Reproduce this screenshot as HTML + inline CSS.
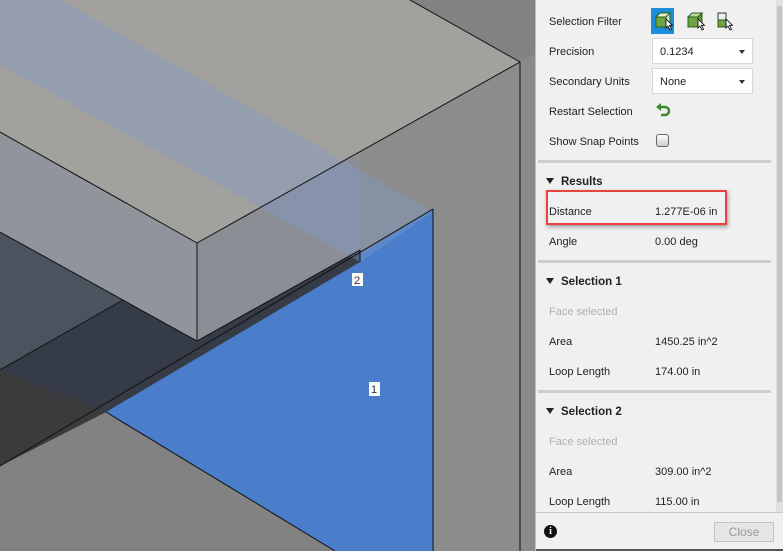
<!DOCTYPE html>
<html><head><meta charset="utf-8"><style>
*{margin:0;padding:0;box-sizing:border-box}
body{width:783px;height:551px;overflow:hidden;position:relative;font-family:"Liberation Sans",Arial,sans-serif;font-size:11px;color:#222;background:#8a8a8a}
svg.v{position:absolute;left:0;top:0}
#p{position:absolute;left:535px;top:0;width:248px;height:551px;background:#f0f0f0;border-left:1px solid #bdbdbd}
.t{position:absolute;left:13px;white-space:nowrap;margin-top:1px}
.val{position:absolute;left:119px;white-space:nowrap;margin-top:1px}
.h{font-weight:bold;font-size:11.5px;left:10px}
.h:before{content:"";display:inline-block;border-left:4px solid transparent;border-right:4px solid transparent;border-top:6px solid #222;margin-right:7px;vertical-align:1px}
.g{color:#b0b0b0}
.sep{position:absolute;left:2px;width:233px;height:3px;background:#cdcdcd}
.dd{position:absolute;left:116px;width:101px;height:26px;background:#fff;border:1px solid #d8d8d8;padding:7px 7px 5px}
.dd:after{content:"";position:absolute;right:7px;top:11px;border-left:3px solid transparent;border-right:3px solid transparent;border-top:4px solid #333}
</style></head><body>
<svg class="v" width="535" height="551" viewBox="0 0 535 551">
<rect width="535" height="551" fill="#8c8c8c"/>
<polygon points="410,0 535,0 535,70 520,62" fill="#828282"/>
<polygon points="520,62 535,54 535,551 520,551" fill="#8a8a8a"/>
<polygon points="0,0 410,0 520,62 197,243 0,132" fill="#a2a19d"/>
<polygon points="0,466 433,209 433,551 0,551" fill="#828282"/>
<polygon points="106,412 433,209 433,551 335,551" fill="#4a7dca"/>
<polygon points="0,232 197,341 360,250 360,262 106,412 0,466" fill="#363c47"/>
<polygon points="0,370 106,412 0,466" fill="#3b3b3d"/>
<polygon points="0,232 123,300 0,370" fill="#4b535e"/>
<polygon points="0,132 197,243 197,341 0,232" fill="#90959b"/>
<polygon points="197,243 360,152 360,250 197,341" fill="#8b8f95"/>
<polygon points="61,0 433,212 360,262 0,65 0,0" fill="rgba(125,155,205,0.38)"/>
<g stroke="#111" stroke-width="1" fill="none">
<line x1="410" y1="0" x2="520" y2="62"/><line x1="520" y1="62" x2="520" y2="551"/>
<line x1="520" y1="62" x2="197" y2="243"/><line x1="197" y1="243" x2="197" y2="341"/>
<line x1="0" y1="132" x2="197" y2="243"/><line x1="0" y1="232" x2="197" y2="341"/>
<line x1="197" y1="341" x2="360" y2="250"/><line x1="360" y1="250" x2="360" y2="262"/>
<line x1="433" y1="209" x2="433" y2="551"/><line x1="433" y1="209" x2="0" y2="466"/>
<line x1="106" y1="412" x2="335" y2="551"/><line x1="0" y1="370" x2="123" y2="300"/>
</g>
<rect x="352" y="273" width="11" height="13" fill="#fafafa"/><text x="354" y="284" font-size="11" fill="#333" font-family="Liberation Sans">2</text>
<rect x="369" y="382" width="11" height="14" fill="#fafafa"/><text x="371" y="393" font-size="11" fill="#333" font-family="Liberation Sans">1</text>
</svg>
<div id="p">
<div style="position:absolute;right:0;top:0;width:7px;height:512px;background:#e0e0e0"><div style="margin:6px 1px;height:496px;background:#c4c4c4;border-radius:2px"></div></div>
<div class="t" style="top:15px">Selection Filter</div>
<div style="position:absolute;left:115px;top:8px;width:23px;height:26px;background:#1a8fd8"></div>
<svg style="position:absolute;left:118px;top:11px" width="90" height="20" viewBox="0 0 90 20">
<g><rect x="2" y="6" width="10" height="10" fill="#6ea543" stroke="#2f5d1a"/><polygon points="2,6 6,2 16,2 12,6" fill="#e8f0dc" stroke="#2f5d1a"/><polygon points="12,6 16,2 16,12 12,16" fill="#d8e8c8" stroke="#2f5d1a"/><path d="M12,8 l0,9 l2,-2 l2,4 l1.5,-.7 l-2,-4 l3,0z" fill="#fff" stroke="#000" stroke-width=".8"/></g>
<g transform="translate(32,0)"><rect x="2" y="6" width="10" height="10" fill="#6ea543" stroke="#2f5d1a"/><polygon points="2,6 6,2 16,2 12,6" fill="#b8d8a0" stroke="#2f5d1a"/><polygon points="12,6 16,2 16,12 12,16" fill="#5a9a30" stroke="#2f5d1a"/><path d="M12,8 l0,9 l2,-2 l2,4 l1.5,-.7 l-2,-4 l3,0z" fill="#fff" stroke="#000" stroke-width=".8"/></g>
<g transform="translate(62,0)"><rect x="2" y="2" width="8" height="7" fill="#eee" stroke="#333"/><rect x="2" y="9" width="8" height="7" fill="#6ea543" stroke="#2f5d1a"/><path d="M10,8 l0,9 l2,-2 l2,4 l1.5,-.7 l-2,-4 l3,0z" fill="#fff" stroke="#000" stroke-width=".8"/></g>
</svg>
<div class="t" style="top:45px">Precision</div>
<div class="dd" style="top:38px">0.1234</div>
<div class="t" style="top:75px">Secondary Units</div>
<div class="dd" style="top:68px">None</div>
<div class="t" style="top:105px">Restart Selection</div>
<svg style="position:absolute;left:119px;top:103px" width="16" height="16" viewBox="0 0 16 16"><path d="M5,4 h5 a4,4 0 0 1 0,8 h-4" fill="none" stroke="#3d8a2a" stroke-width="2.5"/><polygon points="1,4 6,0 6,8" fill="#3d8a2a"/></svg>
<div class="t" style="top:135px">Show Snap Points</div>
<div style="position:absolute;left:120px;top:134px;width:13px;height:13px;border:1px solid #666;border-radius:3px;background:linear-gradient(#fff,#ccc)"></div>
<div class="sep" style="top:160px"></div>
<div class="t h" style="top:175px">Results</div>
<div style="position:absolute;left:10px;top:190px;width:181px;height:35px;border:2px solid #e8413f;box-shadow:1px 2px 4px rgba(0,0,0,.35)"></div>
<div class="t" style="top:205px">Distance</div><div class="val" style="top:205px">1.277E-06 in</div>
<div class="t" style="top:235px">Angle</div><div class="val" style="top:235px">0.00 deg</div>
<div class="sep" style="top:260px"></div>
<div class="t h" style="top:275px">Selection 1</div>
<div class="t g" style="top:305px">Face selected</div>
<div class="t" style="top:335px">Area</div><div class="val" style="top:335px">1450.25 in^2</div>
<div class="t" style="top:365px">Loop Length</div><div class="val" style="top:365px">174.00 in</div>
<div class="sep" style="top:390px"></div>
<div class="t h" style="top:405px">Selection 2</div>
<div class="t g" style="top:435px">Face selected</div>
<div class="t" style="top:465px">Area</div><div class="val" style="top:465px">309.00 in^2</div>
<div class="t" style="top:495px">Loop Length</div><div class="val" style="top:495px">115.00 in</div>
<div style="position:absolute;left:0;top:512px;width:248px;height:1px;background:#c8c8c8"></div>
<div style="position:absolute;left:8px;top:525px;width:13px;height:13px;border-radius:50%;background:#111;color:#fff;font-weight:bold;font-size:10px;text-align:center;line-height:13px;font-family:'Liberation Serif',serif">i</div>
<div style="position:absolute;left:178px;top:522px;width:60px;height:20px;border:1px solid #c4c4c4;background:#e6e6e6;color:#999;font-size:12px;text-align:center;line-height:18px">Close</div>
<div style="position:absolute;left:0;top:549px;width:248px;height:2px;background:#555"></div>
</div>
</body></html>
